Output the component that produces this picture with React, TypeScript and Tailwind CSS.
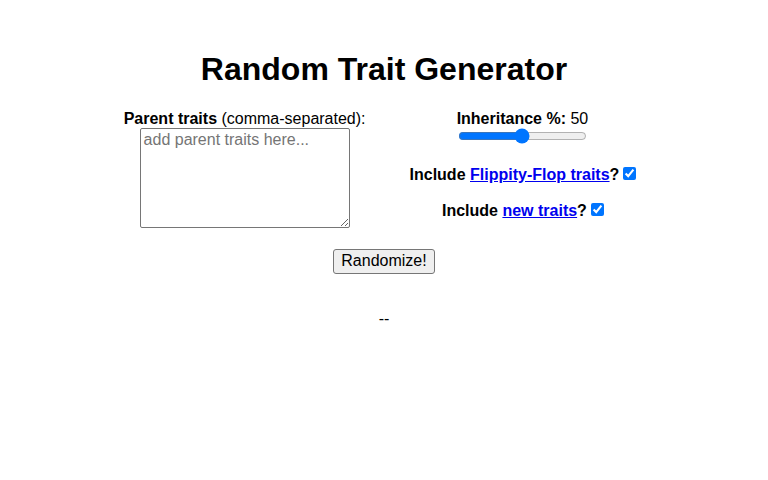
import { useState } from 'react'

export default function App() {
  const [pct, setPct] = useState(50)

  return (
    <div className="min-h-[480px] bg-white pt-[51px] text-center text-base text-black font-['Liberation_Sans',Arial,sans-serif]">
      <h1 className="text-[32px] leading-[36.8px] font-bold mb-[22.5px]">Random Trait Generator</h1>

      <div className="flex justify-center items-start gap-[44px] pr-[5px]">
        <div className="flex flex-col items-center">
          <label htmlFor="parents" className="leading-[18px]">
            <b>Parent traits</b> (comma-separated):
          </label>
          <textarea
            id="parents"
            placeholder="add parent traits here..."
            className="block w-[210px] h-[100px] border border-[#767676] rounded-[2px] pl-[3px] pr-[2px] pt-[2px] pb-[2px] text-left leading-[18.4px] placeholder:text-[#757575]"
          />
        </div>

        <div className="flex flex-col items-center">
          <div className="leading-[18.4px] mr-[4px]">
            <b>Inheritance %:</b> {pct}
          </div>
          <input
            type="range"
            min={0}
            max={100}
            value={pct}
            onChange={(e) => setPct(Number(e.target.value))}
            className="block w-[129px] h-[16px] -mt-[1px] mb-[3px] mr-[4px]"
          />
          <p className="mt-[17px] leading-[18.4px]">
            <b>
              Include{' '}
              <a href="#" className="text-[#0000ee] underline">Flippity-Flop traits</a>?
            </b>
            <input type="checkbox" defaultChecked className="ml-[4px] mr-[3px] my-[3px] align-baseline" />
          </p>
          <p className="mt-[16px] leading-[18.4px]">
            <b>
              Include{' '}
              <a href="#" className="text-[#0000ee] underline">new traits</a>?
            </b>
            <input type="checkbox" defaultChecked className="ml-[4px] mr-[3px] my-[3px] align-baseline" />
          </p>
        </div>
      </div>

      <div className="mt-[21px]">
        <button className="bg-[#efefef] border border-[#767676] rounded-[3px] px-[7px] py-[2px] leading-[18.4px] text-black">
          Randomize!
        </button>
      </div>

      <div className="mt-[36px] leading-[18.4px]">--</div>
    </div>
  )
}
